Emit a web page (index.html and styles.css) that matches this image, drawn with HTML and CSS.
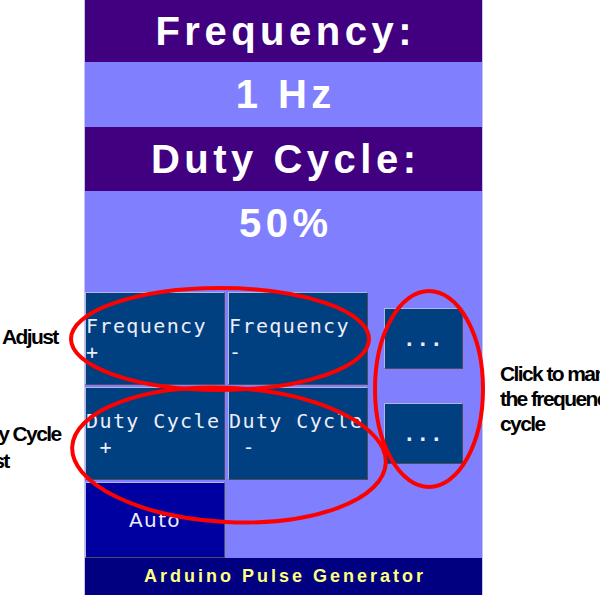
FILE: index.html
```html
<!DOCTYPE html>
<html lang="en">
<head>
    <meta charset="UTF-8">
    <meta name="viewport" content="width=device-width, initial-scale=1.0">
    <title>Arduino Pulse Generator</title>
    <link rel="stylesheet" href="styles.css">
</head>
<body>

    <div class="stage">
        <div class="panel">
            <div class="row head">Frequency:</div>
            <div class="row value">1 Hz</div>
            <div class="row head">Duty Cycle:</div>
            <div class="row value">50%</div>

            <div class="pad">
                <button class="key">Frequency<br>+</button>
                <button class="key">Frequency<br>-</button>
                <button class="key small">...</button>
                <button class="key">Duty Cycle<br>&nbsp;+</button>
                <button class="key">Duty Cycle<br>&nbsp;-</button>
                <button class="key small">...</button>
                <button class="key auto">Auto</button>
            </div>

            <div class="footer">Arduino Pulse Generator</div>
        </div>

        <!-- side notes -->
        <p class="note note-freq">Adjust</p>
        <p class="note note-duty"><span class="l1">Duty Cycle</span><span class="l2">Adjust</span></p>
        <p class="note note-enter">Click to manually enter<br>the frequency or duty<br>cycle</p>

        <svg class="marks" width="600" height="600" viewBox="0 0 600 600">
            <ellipse cx="220" cy="339" rx="149" ry="51"/>
            <ellipse cx="229" cy="455" rx="157" ry="67" transform="rotate(3 229 455)"/>
            <ellipse cx="429" cy="389" rx="54" ry="98"/>
        </svg>
    </div>

</body>
</html>
```

FILE: styles.css
```css
body {
    margin: 0;
    background: #fff;
    overflow: hidden;
}

.stage {
    position: relative;
    width: 600px;
    height: 600px;
    padding-left: 84px;
    box-sizing: border-box;
    overflow: hidden;
}

.panel {
    width: 399px;
    height: 595px;
    box-sizing: border-box;
    background: #8080ff;
    border-left: 1px solid #c4c4ec;
    border-right: 1px solid #c4c4ec;
    display: flex;
    flex-direction: column;
}

/* big readout rows */
.row {
    display: flex;
    align-items: center;
    justify-content: center;
    color: #fff;
    font-family: 'Liberation Sans', Arial, sans-serif;
    font-weight: 700;
    font-size: 40px;
    letter-spacing: 4.5px;
    padding-left: 4.5px;
    height: 64px;
}

.head {
    background: #400080;
}

.row:nth-child(1) { height: 62px; }
.row:nth-child(2) { height: 65px; }
.row:nth-child(4) { height: 65px; }

/* touch keys */
.pad {
    display: grid;
    grid-template-columns: 140px 140px 92px;
    grid-template-rows: 93px 93px 76px;
    column-gap: 3px;
    row-gap: 2px;
    margin-top: 36px;
}

.key {
    margin: 0;
    padding: 0;
    background: #003f80;
    color: #eceef8;
    border: 1px solid;
    border-color: #b4b4dc #4c4c5c #4c4c5c #b4b4dc;
    font-family: 'DejaVu Sans Mono', monospace;
    font-size: 20px;
    letter-spacing: 1.4px;
    line-height: 26px;
    text-align: left;
    white-space: nowrap;
    overflow: hidden;
}

.small {
    width: 79px;
    height: 61px;
    align-self: center;
    justify-self: end;
    text-align: center;
    font-weight: 700;
}

.auto {
    grid-column: 1;
    background: #0000a0;
    text-align: center;
    font-family: 'DejaVu Sans', sans-serif;
}

.footer {
    height: 37px;
    display: flex;
    align-items: center;
    justify-content: center;
    background: #000080;
    color: #ffff80;
    font-family: 'Liberation Sans', Arial, sans-serif;
    font-weight: 700;
    font-size: 18px;
    letter-spacing: 3px;
    padding-left: 3px;
}

/* callout text in the margins */
.note {
    position: absolute;
    margin: 0;
    color: #000;
    font-family: 'Liberation Sans', Arial, sans-serif;
    font-weight: 700;
    font-size: 21px;
    letter-spacing: -1.6px;
    line-height: 25px;
    white-space: nowrap;
}

.note-freq {
    top: 324px;
    left: 2px;
}

.note-duty {
    top: 421px;
    left: 0;
}

.note-duty span {
    display: block;
}

.note-duty .l1 {
    margin-left: -32px;
}

.note-duty .l2 {
    margin-left: -47px;
    margin-top: 2px;
}

.note-enter {
    top: 361px;
    left: 500px;
}

.marks {
    position: absolute;
    left: 0;
    top: 0;
    pointer-events: none;
}

.marks ellipse {
    fill: none;
    stroke: #f00;
    stroke-width: 4;
}
```
